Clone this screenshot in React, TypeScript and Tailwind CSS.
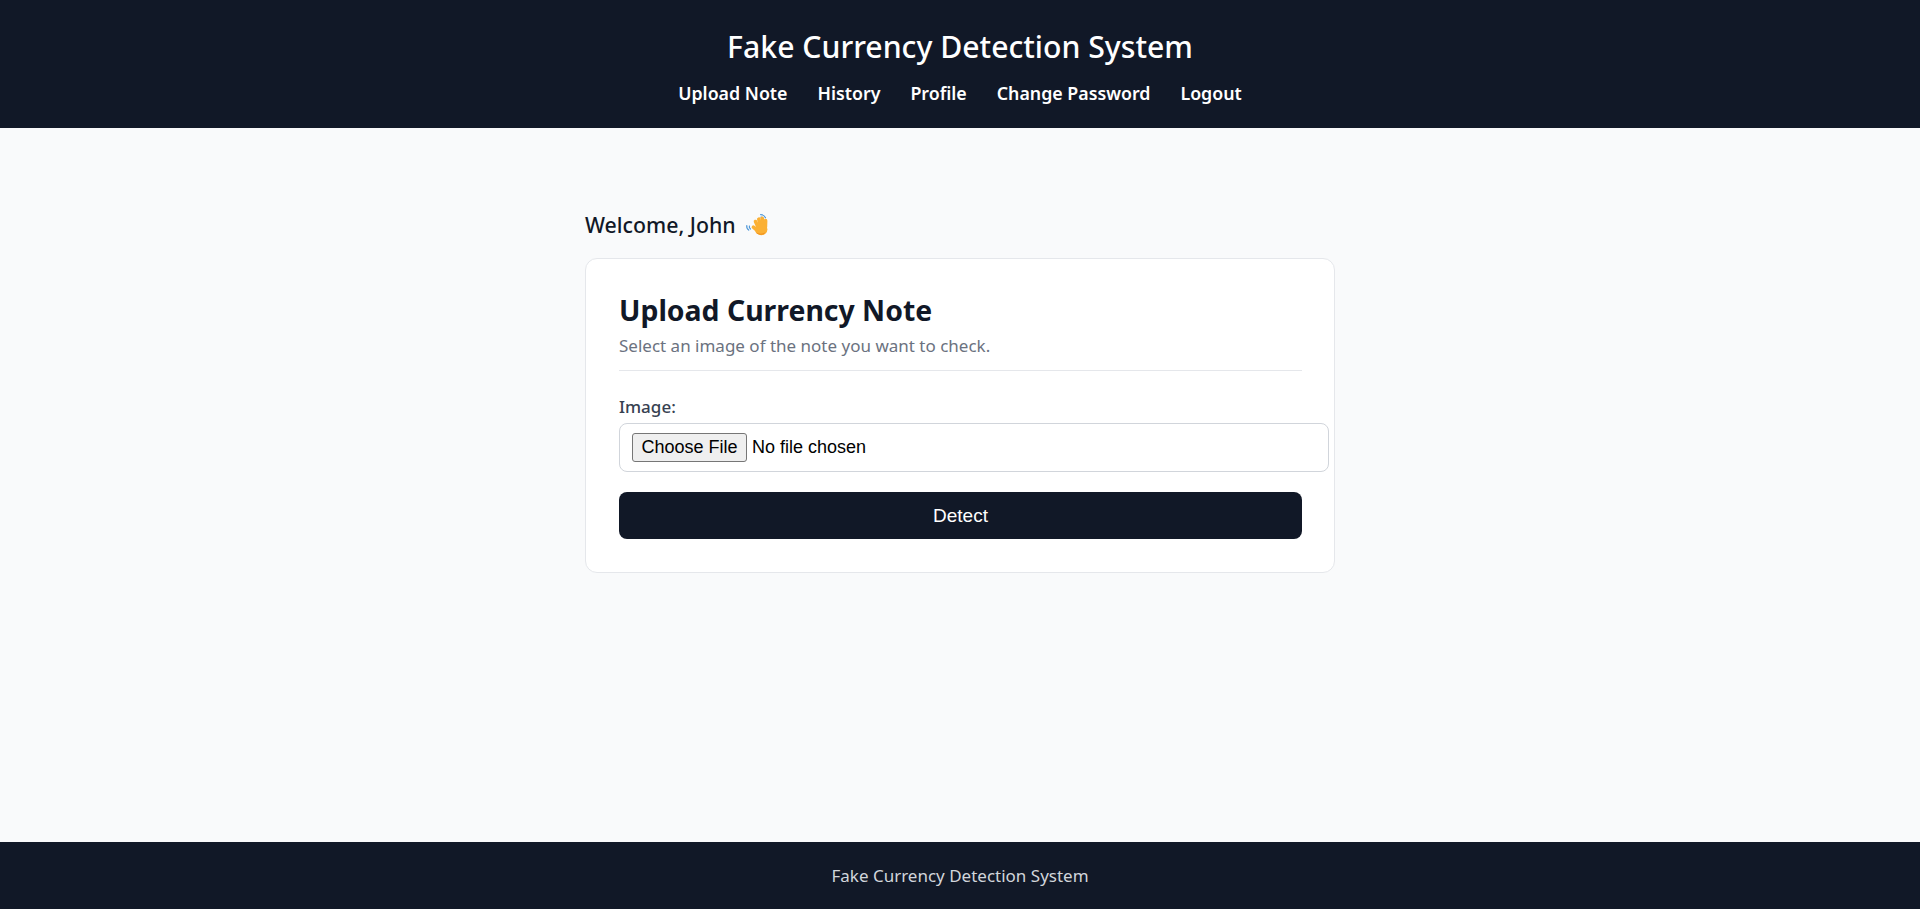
function WaveIcon() {
  return (
    <svg viewBox="0 0 24 24" className="w-[24px] h-[24px] shrink-0">
      <path d="M16 4.2c1.2.1 2.2.8 2.7 1.9M15.6 1.6c2.2 0 4 1.2 4.9 3.2" fill="none" stroke="#4f97d8" strokeWidth="1.2" strokeLinecap="round" />
      <path d="M4.4 13c-.3 1 .1 2.2 1.1 3M1.8 12.6c-.3 1.8.4 3.4 1.9 4.5" fill="none" stroke="#4f97d8" strokeWidth="1.2" strokeLinecap="round" />
      <g fill="none" stroke="#fbb034" strokeWidth="3.6" strokeLinecap="round">
        <path d="M13 14L10.5 8.5" />
        <path d="M15.5 13L13.8 6.2" />
        <path d="M18 13L17.2 5.4" />
        <path d="M20.4 14L20.6 7.6" />
        <path d="M13 18L8.4 14.2" />
      </g>
      <ellipse cx="16.2" cy="16.4" rx="6.2" ry="5.8" fill="#fbb034" />
      <path d="M11 19.6c1.8 2.4 6.8 3.6 9.6-.4-2.8 1.8-6.4 2-9.6.4z" fill="#f19020" />
    </svg>
  );
}

const navLinks = ['Upload Note', 'History', 'Profile', 'Change Password', 'Logout'];

export default function App() {
  return (
    <div className="h-[909px] flex flex-col bg-[#f9fafb] font-['Noto_Sans','Open_Sans',sans-serif]">
      <header className="h-[128px] shrink-0 bg-[#111827] flex flex-col items-center text-white">
        <h1 className="mt-[27px] text-[30.2px] leading-[40px] font-medium">Fake Currency Detection System</h1>
        <nav className="mt-[14px] flex gap-[30px] text-[17.8px] leading-[24px] font-semibold">
          {navLinks.map((link) => (
            <a key={link} href="#">{link}</a>
          ))}
        </nav>
      </header>

      <main className="flex-1 w-[750px] mx-auto pt-[82px]">
        <div className="flex items-center gap-[9px] h-[30px] text-[21.3px] font-medium text-[#111827]">
          Welcome, John <WaveIcon />
        </div>

        <div className="mt-[18px] h-[315px] bg-white border border-[#e5e7eb] rounded-xl pl-[33px] pr-[32px] pt-[32px]">
          <h2 className="text-[28.4px] leading-[38px] font-bold text-[#111827]">Upload Currency Note</h2>
          <p className="mt-[5px] text-[17px] leading-[24px] text-[#6b7280]">Select an image of the note you want to check.</p>
          <div className="mt-[12px] border-t border-[#e5e7eb]" />

          <label className="block mt-[25px] text-[17px] leading-[22px] font-medium text-[#374151]">Image:</label>
          <input
            type="file"
            className="block box-content mt-[5px] w-full h-[23px] pt-[9px] pb-[15px] pl-[12px] pr-[13px] bg-white border-[1.5px] border-[#d1d5db] rounded-lg text-[18px] font-['Liberation_Sans',Arial,sans-serif] text-black file:text-[18px] file:px-[8.5px] file:mr-[5px] file:bg-[#efefef] file:border file:border-[#767676] file:rounded-[3px]"
          />
          <button className="mt-[20px] w-full h-[47px] pt-[1px] bg-[#111827] text-white rounded-lg text-[19px] font-['Liberation_Sans',Arial,sans-serif]">
            Detect
          </button>
        </div>
      </main>

      <footer className="h-[67px] shrink-0 bg-[#111827] flex items-center justify-center text-[17px] text-[#d1d5db]">
        Fake Currency Detection System
      </footer>
    </div>
  );
}
